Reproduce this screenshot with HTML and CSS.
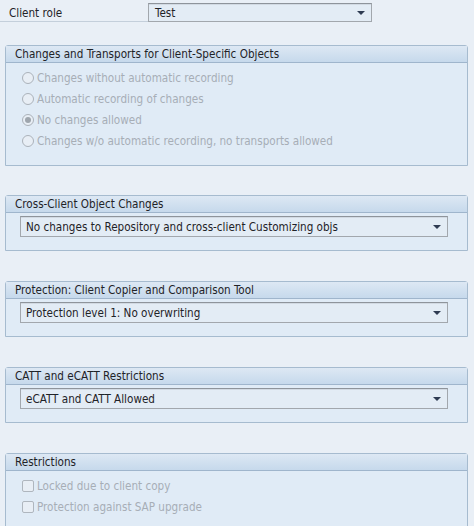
FILE: index.html
```html
<!DOCTYPE html>
<html lang="en">
<head>
    <meta charset="UTF-8">
    <title>Client Settings</title>
<link rel="stylesheet" href="styles.css">
</head>
<body>

    <!-- client role -->
    <div class="role-row">
        <span class="role-label">Client role</span>
        <div class="combo role-combo"><span>Test</span><i class="arrow"></i></div>
    </div>

    <!-- changes and transports -->
    <div class="group first">
        <div class="group-head">Changes and Transports for Client-Specific Objects</div>
        <div class="group-body list">
            <div class="choice"><span class="radio"></span>Changes without automatic recording</div>
            <div class="choice"><span class="radio"></span>Automatic recording of changes</div>
            <div class="choice"><span class="radio on"></span>No changes allowed</div>
            <div class="choice"><span class="radio"></span>Changes w/o automatic recording, no transports allowed</div>
        </div>
    </div>

    <div class="group">
        <div class="group-head">Cross-Client Object Changes</div>
        <div class="group-body">
            <div class="combo"><span>No changes to Repository and cross-client Customizing objs</span><i class="arrow"></i></div>
        </div>
    </div>

    <div class="group">
        <div class="group-head">Protection: Client Copier and Comparison Tool</div>
        <div class="group-body">
            <div class="combo"><span>Protection level 1: No overwriting</span><i class="arrow"></i></div>
        </div>
    </div>

    <div class="group">
        <div class="group-head">CATT and eCATT Restrictions</div>
        <div class="group-body">
            <div class="combo"><span>eCATT and CATT Allowed</span><i class="arrow"></i></div>
        </div>
    </div>

    <div class="group">
        <div class="group-head">Restrictions</div>
        <div class="group-body list">
            <div class="choice"><span class="check"></span>Locked due to client copy</div>
            <div class="choice"><span class="check"></span>Protection against SAP upgrade</div>
        </div>
    </div>

</body>
</html>
```

FILE: styles.css
```css
*{
    margin: 0;
    padding: 0;
    box-sizing: border-box;
}
body{
    font-family: "DejaVu Sans Condensed", "DejaVu Sans", sans-serif;
    font-size: 11.6px;
    color: #1f2328;
    background: #e9eff6;
    height: 526px;
    overflow: hidden;
}
.role-row{
    display: flex;
    height: 22px;
}
.role-label{
    width: 148px;
    padding: 6px 0 0 9px;
    border-bottom: 1px solid #c4cfdb;
}
.combo{
    display: flex;
    align-items: center;
    justify-content: space-between;
    height: 21px;
    padding: 0 4px 0 5px;
    background: #e3ecf5;
    border: 1px solid #a2a7ad;
    border-top-color: #8e949b;
    box-shadow: inset 0 1px 0 #d2dae3;
}
.role-combo{
    width: 224px;
    height: 19px;
    margin-top: 3px;
    padding-left: 6px;
}
.arrow{
    width: 0;
    height: 0;
    border-left: 4px solid transparent;
    border-right: 4px solid transparent;
    border-top: 4px solid #2e3b52;
    margin-right: 2px;
}
.group{
    margin: 30px 6px 0 5px;
    border: 1px solid #a6bbcf;
    border-radius: 3px 3px 0 0;
    background: #e0ebf6;
}
.group.first{
    margin-top: 23px;
}
.group.first + .group{
    margin-top: 29px;
}
.group-head{
    height: 17px;
    padding: 1px 0 0 9px;
    background: linear-gradient(#dde8f4, #c6d9ec);
    border-bottom: 1px solid #9fb5cc;
}
.group-body{
    padding: 3px 19px 13px 14px;
}
.group-body.list{
    padding: 4px 0 14px 16px;
}
.choice{
    display: flex;
    align-items: center;
    height: 21px;
    color: #a7aeb6;
}
.radio{
    width: 12px;
    height: 12px;
    margin-right: 3px;
    border: 1px solid #abb2ba;
    border-radius: 50%;
    background: #e8eef5;
    display: flex;
    align-items: center;
    justify-content: center;
}
.radio.on::after{
    content: "";
    width: 6px;
    height: 6px;
    border-radius: 50%;
    background: #9ea5ad;
}
.check{
    width: 12px;
    height: 12px;
    margin-right: 3px;
    border: 1px solid #afb6be;
    border-radius: 2px;
    background: #e8eef5;
}
```
